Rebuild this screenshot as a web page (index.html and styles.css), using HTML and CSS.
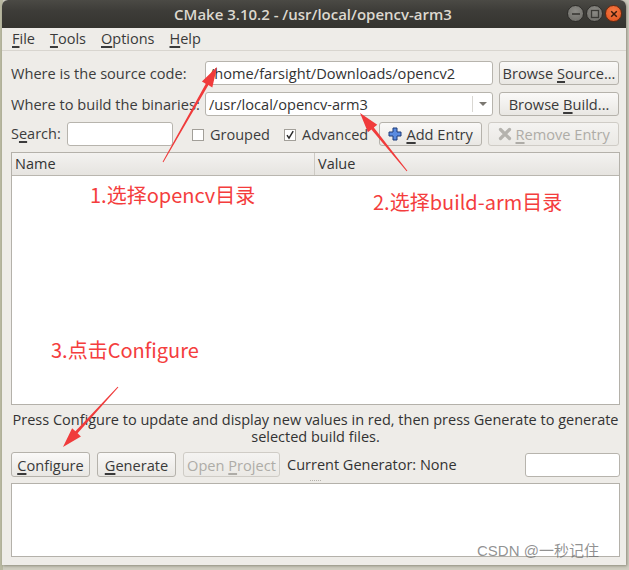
FILE: index.html
```html
<!DOCTYPE html>
<html>
<head>
<meta charset="utf-8">
<link rel="stylesheet" href="styles.css">
</head>
<body>
<div class="screen">
  <div class="window">
    <div class="titlebar">
      <span class="title">CMake 3.10.2 - /usr/local/opencv-arm3</span>
      <div class="wbtns">
        <span class="wbtn"><svg width="10" height="10" viewBox="0 0 10 10"><rect x="1" y="4.2" width="8" height="1.6" fill="#3a3935"/></svg></span>
        <span class="wbtn"><svg width="10" height="10" viewBox="0 0 10 10"><rect x="1.5" y="1.5" width="7" height="7" fill="none" stroke="#3a3935" stroke-width="1.3"/></svg></span>
        <span class="wbtn close"><svg width="10" height="10" viewBox="0 0 10 10"><path d="M2.2 2.2L7.8 7.8M7.8 2.2L2.2 7.8" stroke="#3b1a0c" stroke-width="1.5"/></svg></span>
      </div>
    </div>
    <div class="menubar">
      <span class="menu"><u>F</u>ile</span>
      <span class="menu"><u>T</u>ools</span>
      <span class="menu"><u>O</u>ptions</span>
      <span class="menu"><u>H</u>elp</span>
    </div>
    <div class="content">
      <div class="paths">
        <span class="label">Where is the source code:</span>
        <div class="field">/home/farsight/Downloads/opencv2</div>
        <div class="btn"><span>Browse <u>S</u>ource...</span></div>
        <span class="label">Where to build the binaries:</span>
        <div class="field combo"><span class="combo-text">/usr/local/opencv-arm3</span><span class="combo-arrow"><svg width="10" height="6" viewBox="0 0 10 6"><path d="M1 1L5 5L9 1Z" fill="#7a7771"/></svg></span></div>
        <div class="btn"><span>Browse <u>B</u>uild...</span></div>
      </div>
      <div class="toolrow">
        <span class="search-label">S<u>e</u>arch:</span>
        <div class="field search"></div>
        <span class="check grouped"><span class="box"></span>Grouped</span>
        <span class="check advanced"><span class="box"><svg width="10" height="10" viewBox="0 0 10 10"><path d="M2 5.2L4 8.2L8.2 1.2" fill="none" stroke="#2b2b2b" stroke-width="1.5"/></svg></span>Advanced</span>
        <div class="btn add"><svg class="ico" width="14" height="14" viewBox="0 0 14 14"><path d="M5 1H9V5H13V9H9V13H5V9H1V5H5Z" fill="#5a8be0" stroke="#1d3a78" stroke-width="1"/></svg><span><u>A</u>dd Entry</span></div>
        <div class="btn disabled remove"><svg class="ico" width="14" height="14" viewBox="0 0 14 14"><path d="M2.5 2.5L11.5 11.5M11.5 2.5L2.5 11.5" stroke="#b5b3ae" stroke-width="3.2" stroke-linecap="round"/></svg><span><u>R</u>emove Entry</span></div>
      </div>
      <div class="table">
        <div class="thead">
          <div class="th name">Name</div>
          <div class="th value">Value</div>
        </div>
        <div class="tbody"></div>
      </div>
      <div class="message">
        <div class="msg-line">Press Configure to update and display new values in red, then press Generate to generate</div>
        <div class="msg-line">selected build files.</div>
      </div>
      <div class="actions">
        <div class="btn act"><span><u>C</u>onfigure</span></div>
        <div class="btn act"><span><u>G</u>enerate</span></div>
        <div class="btn act disabled"><span>Open <u>P</u>roject</span></div>
        <span class="generator">Current Generator: None</span>
        <div class="field gen-field"></div>
      </div>
      <div class="splitter"><span class="dots"></span></div>
      <div class="output"></div>
    </div>
  </div>

  <div class="note note1">1.选择opencv目录</div>
  <div class="note note2">2.选择build-arm目录</div>
  <div class="note note3">3.点击Configure</div>
  <svg class="arrows" width="629" height="570" viewBox="0 0 629 570">
    <polygon points="163.4,162.2 208.4,85.1 212.3,87.4 217,67 201.9,81.4 205.8,83.7 162.6,161.8" fill="#f03b3b"/>
    <polygon points="407.4,170.7 373.8,127.6 377.3,124.7 360,113 367.9,132.3 371.4,129.4 406.6,171.3" fill="#f03b3b"/>
    <polygon points="118.4,387.3 77.6,433.3 80.9,436.4 63,447 72.1,428.2 75.4,431.3 117.6,386.7" fill="#f03b3b"/>
  </svg>
  <div class="watermark">CSDN @一秒记住</div>
</div>
</body>
</html>
```

FILE: styles.css
```css
* { box-sizing: border-box; }
html, body { margin: 0; padding: 0; }
body {
  font-family: "Open Sans", "Noto Sans CJK SC", sans-serif;
  color: #3c3c3c;
}
.screen {
  position: relative;
  width: 629px;
  height: 570px;
  overflow: hidden;
  background: linear-gradient(to right, #b9b9a2 0, #b9b9a2 3px, #cfcdc0 3px);
}
.window {
  margin-left: 2px;
  width: 624px;
  height: 565px;
  background: #eeece8;
  border-radius: 6px 6px 0 0;
  box-shadow: 1px 1px 3px rgba(60, 60, 40, 0.45);
  display: flex;
  flex-direction: column;
}
.titlebar {
  position: relative;
  height: 28px;
  flex: none;
  border-radius: 6px 6px 0 0;
  background: linear-gradient(#4b4a45, #3d3c38 40%, #35342f);
  display: flex;
  align-items: center;
  justify-content: center;
}
.title {
  color: #dcd8cf;
  font-size: 15px;
  font-weight: 600;
  line-height: 28px;
  margin-left: -2px;
}
.wbtns {
  position: absolute;
  right: 4px;
  top: 5px;
  display: flex;
  gap: 2px;
}
.wbtn {
  width: 17px;
  height: 17px;
  border-radius: 50%;
  background: radial-gradient(circle at 50% 35%, #8c8b86, #6a6964);
  border: 1px solid #2e2d2a;
  display: flex;
  align-items: center;
  justify-content: center;
}
.wbtn.close {
  background: radial-gradient(circle at 50% 35%, #f57a45, #e2511c);
  border-color: #6a2a10;
}
.menubar {
  height: 23px;
  flex: none;
  display: flex;
  align-items: center;
  padding-left: 10px;
  border-bottom: 1px solid #d8d5cf;
  font-size: 14.5px;
  color: #3a3a3a;
}
.menu { margin-right: 15px; line-height: 20px; }
u { text-decoration-thickness: 1.5px; text-underline-offset: 2px; }
.content {
  flex: 1;
  padding: 10px 6px 0 9px;
  display: flex;
  flex-direction: column;
  font-size: 14.5px;
}
.paths {
  display: grid;
  grid-template-columns: 188px 288px 120px;
  column-gap: 6px;
  row-gap: 7px;
  align-items: center;
}
.label { white-space: nowrap; line-height: 24px; color: #3c3c3c; font-size: 14.6px; }
.field {
  height: 24px;
  background: #fff;
  border: 1px solid #b7b4ad;
  border-radius: 3px;
  padding: 0 3px;
  line-height: 22px;
  font-size: 14.6px;
  color: #333;
  white-space: nowrap;
  overflow: hidden;
}
.combo {
  display: flex;
  padding-right: 0;
}
.combo-text { flex: 1; }
.combo-arrow {
  width: 20px;
  border-left: 1px solid #d9d7d2;
  display: flex;
  align-items: center;
  justify-content: center;
  margin: 3px 0;
}
.btn {
  height: 24px;
  border: 1px solid #b5b2ab;
  border-radius: 3px;
  background: linear-gradient(#faf9f8, #e9e7e3);
  display: flex;
  align-items: center;
  justify-content: center;
  font-size: 14.6px;
  color: #3a3a3a;
  white-space: nowrap;
  line-height: 22px;
}
.btn.disabled { color: #aeaca7; border-color: #cfccc6; background: linear-gradient(#f4f3f1, #ebe9e5); }
.ico { margin-right: 4px; flex: none; }
.toolrow {
  margin-top: 6px;
  display: flex;
  align-items: center;
  height: 24px;
}
.search-label { width: 56px; line-height: 24px; }
.search { width: 106px; }
.check {
  display: flex;
  align-items: center;
  line-height: 24px;
  padding-top: 1px;
}
.box {
  width: 12px;
  height: 12px;
  border: 1px solid #a29f99;
  background: #fff;
  margin-right: 6px;
  display: flex;
  align-items: center;
  justify-content: center;
}
.grouped { margin-left: 19px; }
.advanced { margin-left: 14px; }
.add { width: 103px; margin-left: 11px; }
.remove { width: 131px; margin-left: 6px; }
.table {
  margin-top: 6px;
  height: 253px;
  width: 609px;
  border: 1px solid #b4b1aa;
  background: #fff;
  display: flex;
  flex-direction: column;
}
.thead {
  height: 23px;
  display: flex;
  background: linear-gradient(#f3f2f0, #e6e4e0);
  border-bottom: 1px solid #b9b6af;
}
.th {
  line-height: 22px;
  padding-left: 3px;
  color: #333;
}
.th.name { width: 303px; border-right: 1px solid #cdcac4; }
.th.value { flex: 1; }
.tbody { flex: 1; }
.message {
  margin-top: 6px;
  text-align: center;
  font-size: 14.5px;
  color: #333;
}
.msg-line { height: 17px; line-height: 17px; white-space: nowrap; }
.actions {
  margin-top: 7px;
  display: flex;
  align-items: center;
  height: 25px;
}
.btn.act { height: 25px; width: 79px; margin-right: 7px; }
.btn.act.disabled { width: 97px; }
.generator { color: #333; }
.gen-field { margin-left: auto; width: 95px; height: 24px; }
.splitter {
  height: 6px;
  display: flex;
  justify-content: center;
  align-items: center;
}
.dots {
  width: 12px;
  height: 1px;
  background: repeating-linear-gradient(to right, #b5b2ac 0 1px, transparent 1px 2px);
}
.output {
  height: 74px;
  width: 609px;
  border: 1px solid #b4b1aa;
  background: #fff;
}
.note {
  position: absolute;
  color: #f43d3d;
  font-size: 20px;
  line-height: 24px;
  white-space: nowrap;
  font-family: "Noto Sans CJK SC", sans-serif;
}
.note1 { left: 90px; top: 183px; }
.note2 { left: 373px; top: 190px; }
.note3 { left: 51px; top: 338px; }
.arrows { position: absolute; left: 0; top: 0; pointer-events: none; }
.watermark {
  position: absolute;
  left: 477px;
  top: 542px;
  font-size: 15px;
  line-height: 18px;
  color: rgba(110, 110, 110, 0.75);
  font-family: "Liberation Sans", "Noto Sans CJK SC", sans-serif;
  white-space: nowrap;
}
```
